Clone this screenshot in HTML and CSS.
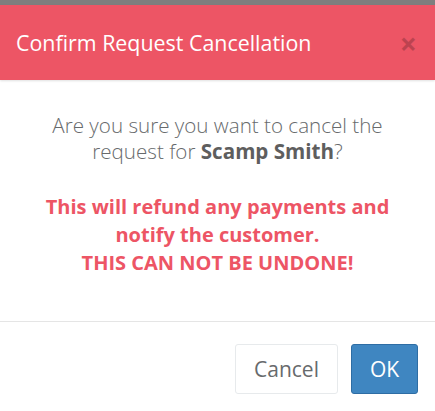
FILE: index.html
```html
<!DOCTYPE html>
<html>
<head>
<meta charset="utf-8">
<link rel="stylesheet" href="styles.css">
</head>
<body>
<div class="topbar"></div>
<div class="modal">
  <div class="modal-header">
    <h4 class="modal-title">Confirm Request Cancellation</h4>
    <span class="close">&times;</span>
  </div>
  <div class="modal-body">
    <p class="question">Are you sure you want to cancel the<br>request for <b>Scamp Smith</b>?</p>
    <p class="warning">This will refund any payments and<br>notify the customer.<br>THIS CAN NOT BE UNDONE!</p>
  </div>
  <div class="modal-footer">
    <button class="btn btn-default">Cancel</button>
    <button class="btn btn-primary">OK</button>
  </div>
</div>
</body>
</html>
```
FILE: styles.css
```css
html, body {
  margin: 0;
  padding: 0;
  background: #ffffff;
  font-family: "Open Sans", "Liberation Sans", sans-serif;
}
.topbar {
  height: 5px;
  background: #7e7e7e;
}
.modal {
  display: flex;
  flex-direction: column;
}
.modal-header {
  height: 75px;
  background: #ed5565;
  display: flex;
  align-items: center;
  justify-content: space-between;
  padding: 0 16px;
  box-shadow: 0 1px 2px rgba(0,0,0,0.12);
  position: relative;
}
.modal-title {
  margin: 0;
  color: #ffffff;
  font-size: 21.4px;
  font-weight: 400;
}
.close {
  color: #000;
  opacity: 0.2;
  font-size: 30px;
  font-weight: 700;
  line-height: 1;
  margin-right: 2px;
  margin-top: 2px;
}
.modal-body {
  height: 241px;
  padding-top: 32px;
  box-sizing: border-box;
  text-align: center;
}
.question {
  margin: 0;
  color: #676a6c;
  font-size: 20.6px;
  font-weight: 300;
  line-height: 26px;
}
.question b {
  font-weight: 700;
  color: #5e5e5e;
}
.warning {
  margin: 29px 0 0;
  color: #ed5565;
  font-size: 20px;
  font-weight: 700;
  line-height: 28px;
}
.modal-footer {
  border-top: 1px solid #e5e5e5;
  display: flex;
  justify-content: flex-end;
  gap: 13px;
  padding: 22px 17px 0;
}
.btn {
  height: 50px;
  font-family: "Open Sans", "Liberation Sans", sans-serif;
  font-size: 21px;
  border-radius: 3px;
  padding: 0;
}
.btn-default {
  background: #ffffff;
  color: #676a6c;
  border: 1px solid #e7eaec;
  width: 103px;
}
.btn-primary {
  background: #3f86c1;
  color: #ffffff;
  border: 1px solid #2e6da4;
  width: 67px;
}
```
